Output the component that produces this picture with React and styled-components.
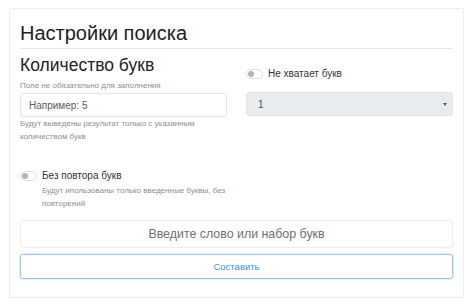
import React from 'react';
import styled, { createGlobalStyle } from 'styled-components';

const Global = createGlobalStyle`
  html, body { margin: 0; padding: 0; background: #fff; }
  body { font-family: "Liberation Sans", Arial, sans-serif; color: #212529; }
  * { box-sizing: border-box; }
`;

const Page = styled.div`
  width: 474px;
  height: 305px;
  padding: 8px 10px 7px 9px;
`;

const Card = styled.div`
  height: 290px;
  border: 1px solid #ececec;
  border-radius: 2px;
  padding: 11px 10px 0 10px;
`;

const Title = styled.h1`
  margin: 0;
  font-size: 20px;
  font-weight: 400;
  line-height: 26px;
  padding-bottom: 2px;
  border-bottom: 1px solid #e6e6e6;
  color: #222;
`;

const Row = styled.div`
  display: grid;
  grid-template-columns: 207px 207px;
  column-gap: 19px;
  margin-top: 5px;
`;

const Col = styled.div`
  display: flex;
  flex-direction: column;
  padding-top: ${p => p.$top || 0}px;
`;

const Subtitle = styled.h2`
  margin: 0;
  font-size: 17.5px;
  font-weight: 400;
  line-height: 22px;
  color: #222;
`;

const Hint = styled.div`
  font-size: 8px;
  line-height: 13px;
  color: #8a9096;
  margin-top: ${p => p.$mt || 0}px;
`;

const TextInput = styled.div`
  height: 24px;
  border: 1px solid #e3e6e9;
  border-radius: 3px;
  padding: 0 8px;
  display: flex;
  align-items: center;
  font-size: 10px;
  color: #555b61;
  margin-top: 1px;
`;

const Select = styled.div`
  height: 24px;
  border-radius: 3px;
  background: #e9ecef;
  border: 1px solid #e1e4e7;
  padding: 0 5px 0 11px;
  display: flex;
  align-items: center;
  justify-content: space-between;
  font-size: 10px;
  color: #495057;
  margin-top: 11px;
`;

const Caret = styled.span`
  width: 0;
  height: 0;
  border-left: 2px solid transparent;
  border-right: 2px solid transparent;
  border-top: 3px solid #555;
`;

const SwitchRow = styled.label`
  display: flex;
  align-items: center;
  gap: 5px;
  font-size: 10px;
  color: #333;
  line-height: 14px;
`;

const Track = styled.span`
  width: 17px;
  height: 10px;
  border: 1px solid #dcdfe2;
  border-radius: 6px;
  background: #fff;
  position: relative;
  &::after {
    content: '';
    position: absolute;
    left: 1px;
    top: 1px;
    width: 6px;
    height: 6px;
    border-radius: 50%;
    background: #adb5bd;
  }
`;

const Block = styled.div`
  margin-top: ${p => p.$mt || 0}px;
  padding-left: ${p => p.$pl || 0}px;
`;

const WordInput = styled.div`
  height: 28px;
  border: 1px solid #ebedef;
  border-radius: 3px;
  display: flex;
  align-items: center;
  justify-content: center;
  font-size: 12.4px;
  color: #6c7177;
  margin-top: 10px;
`;

const Button = styled.div`
  height: 25px;
  margin-top: 6px;
  border: 1px solid #9fc4f4;
  border-radius: 3px;
  display: flex;
  align-items: center;
  justify-content: center;
  font-size: 9.5px;
  color: #3d8bf0;
  box-shadow: 0 0 0 1px #e4eefc;
`;

const Switch = ({ children }) => (
  <SwitchRow>
    <Track />
    {children}
  </SwitchRow>
);

export default function App() {
  return (
    <>
      <Global />
      <Page>
        <Card>
          <Title>Настройки поиска</Title>
          <Row>
            <Col>
              <Subtitle>Количество букв</Subtitle>
              <Hint $mt={3}>Поле не обязательно для заполнения</Hint>
              <TextInput>Например: 5</TextInput>
              <Hint $mt={0}>Будут выведены результат только с указанным<br />количеством букв</Hint>
            </Col>
            <Col $top={13}>
              <Switch>Не хватает букв</Switch>
              <Select>
                <span>1</span>
                <Caret />
              </Select>
            </Col>
          </Row>
          <Block $mt={26}>
            <Switch>Без повтора букв</Switch>
          </Block>
          <Block $mt={1} $pl={22}>
            <Hint>Будут ипользованы только введенные буквы, без<br />повторений</Hint>
          </Block>
          <WordInput>Введите слово или набор букв</WordInput>
          <Button>Составить</Button>
        </Card>
      </Page>
    </>
  );
}
